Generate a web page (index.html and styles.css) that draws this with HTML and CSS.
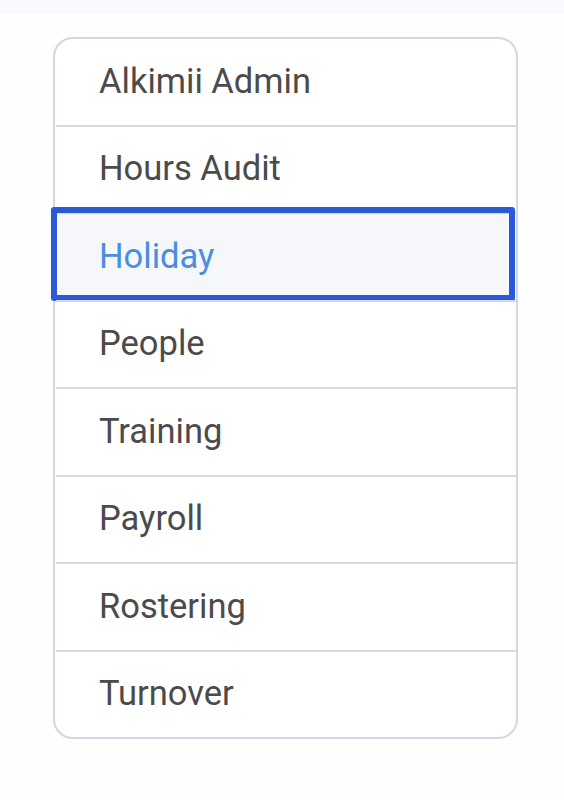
FILE: index.html
```html
<!DOCTYPE html>
<html lang="en">
<head>
<meta charset="utf-8">
<title>Menu</title>
<link rel="stylesheet" href="styles.css">
</head>
<body>
<div class="topband"></div>
<main class="page">
  <nav class="menu">
    <a class="item">Alkimii Admin</a>
    <a class="item">Hours Audit</a>
    <a class="item active">Holiday</a>
    <a class="item">People</a>
    <a class="item">Training</a>
    <a class="item">Payroll</a>
    <a class="item">Rostering</a>
    <a class="item">Turnover</a>
  </nav>
</main>
</body>
</html>
```

FILE: styles.css
```css
html, body {
  margin: 0;
  padding: 0;
  background: #fefefe;
  font-family: Roboto, "Liberation Sans", sans-serif;
}
.topband {
  height: 13px;
  background: #f8f9fc;
}
.page {
  padding: 24px 0 0 53px;
}
.menu {
  width: 461px;
  border: 2px solid #d3d6e3;
  border-radius: 20px;
  display: flex;
  flex-direction: column;
  background: #fff;
}
.item {
  position: relative;
  display: flex;
  align-items: center;
  height: 87.5px;
  padding-left: 43px;
  margin-left: 1px;
  font-size: 34.5px;
  line-height: 1;
  padding-bottom: 2px;
  box-sizing: border-box;
  color: #4b4b4b;
  border-top: 2px solid #d6d9e3;
}
.item:first-child {
  border-top: none;
  height: 85.5px;
}
.item.active {
  background: #f5f7fb;
  color: #4a8ee0;
}
.item.active::after {
  content: "";
  position: absolute;
  top: -7px;
  bottom: -1px;
  left: -5px;
  right: 1px;
  border: 6px solid #2a5ad6;
  border-radius: 3px;
}
```
